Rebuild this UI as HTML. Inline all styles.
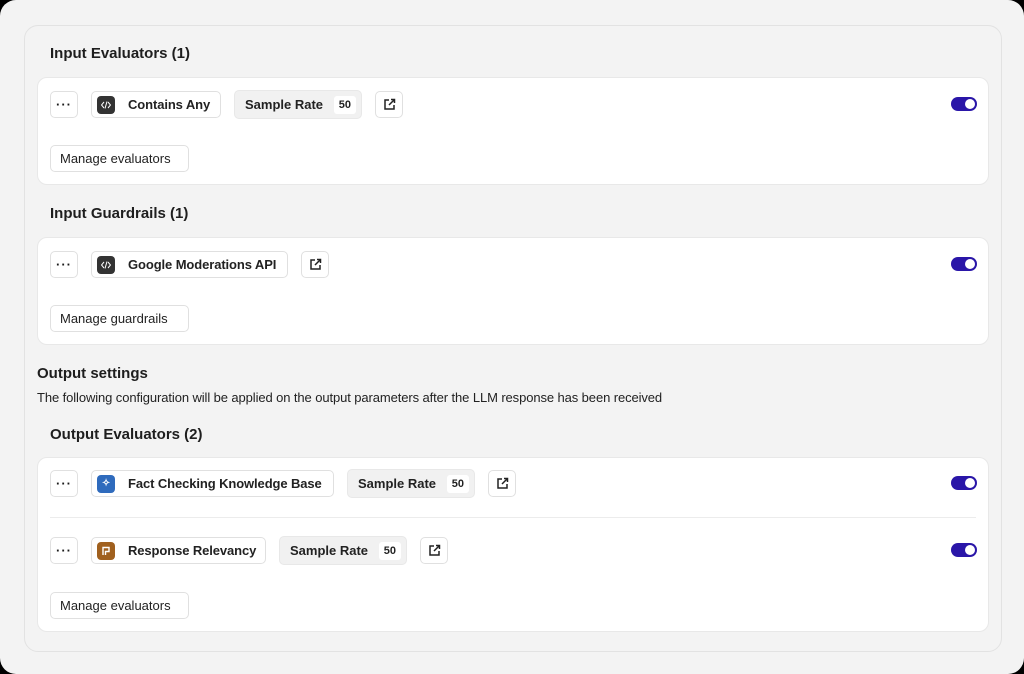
<!DOCTYPE html>
<html><head><style>
*{box-sizing:border-box;margin:0;padding:0}
body{width:1024px;height:674px;background:#000;font-family:"Liberation Sans",sans-serif;color:#1a1a1a;overflow:hidden}
.frame{position:absolute;left:0;top:0;width:1024px;height:674px;background:#f3f3f3;border-radius:16px;overflow:hidden}
.outer{position:absolute;left:24px;top:25px;width:978px;height:627px;border:1px solid #e2e2e2;border-radius:14px;background:#f3f3f3}
.card{position:absolute;left:37px;width:952px;background:#fff;border:1px solid #e8e8e8;border-radius:10px}
.h{position:absolute;font-size:15px;font-weight:600;color:#1e1e1e;white-space:nowrap}
.btn{position:absolute;height:27px;border:1px solid #e0e0e0;border-radius:5px;background:#fff;font-size:13px;display:flex;align-items:center;white-space:nowrap}
.dots{width:28px;justify-content:center;font-size:13px;font-weight:bold;letter-spacing:1px;line-height:1}
.chip{padding:0 10px 0 5px;font-weight:600;color:#222;letter-spacing:-0.1px}
.ic{width:18px;height:18px;border-radius:4px;margin-right:13px;display:flex;align-items:center;justify-content:center;flex:none}
.sr{position:absolute;height:29px;background:#f1f1f1;border:1px solid #e8e8e8;border-radius:5px;font-size:13px;font-weight:600;display:flex;align-items:center;justify-content:space-between;padding:0 5px 0 10px;color:#222;white-space:nowrap}
.sr span{background:#fff;border-radius:3px;font-size:11px;padding:3px 5px;font-weight:600}
.lnk{width:28px;justify-content:center}
.tog{position:absolute;width:26px;height:14px;border-radius:7px;background:#2a16a8;left:913px}
.tog:after{content:"";position:absolute;right:2px;top:2px;width:10px;height:10px;border-radius:50%;background:#fff}
.mg{padding:0 9px;font-weight:500;color:#222}
</style></head><body><div class="frame">
<div class="outer"></div>
<div class="h" style="left:50px;top:45px">Input Evaluators (1)</div>
<div class="card" style="top:77px;height:108px">
 <div class="btn dots" style="left:12px;top:13px">···</div>
 <div class="btn chip" style="left:53px;top:13px;width:130px"><div class="ic" style="background:#333"><svg width="10" height="8" viewBox="0 0 10 8" fill="none" stroke="#fff" stroke-width="1"><path d="M3 1L0.5 4L3 7M7 1L9.5 4L7 7M6 0.5L4 7.5"/></svg></div>Contains Any</div>
 <div class="sr" style="left:196px;top:12px;width:128px">Sample Rate<span>50</span></div>
 <div class="btn lnk" style="left:337px;top:13px"><svg width="13" height="13" viewBox="0 0 13 13" fill="none" stroke="#222" stroke-width="1.5"><path d="M6 2H2v9h9V7M8 1.5h3.5V5M11.5 1.5L6 7"/></svg></div>
 <div class="tog" style="top:19px"></div>
 <div class="btn mg" style="left:12px;top:67px;width:139px">Manage evaluators</div>
</div>
<div class="h" style="left:50px;top:205px">Input Guardrails (1)</div>
<div class="card" style="top:237px;height:108px">
 <div class="btn dots" style="left:12px;top:13px">···</div>
 <div class="btn chip" style="left:53px;top:13px;width:197px"><div class="ic" style="background:#333"><svg width="10" height="8" viewBox="0 0 10 8" fill="none" stroke="#fff" stroke-width="1"><path d="M3 1L0.5 4L3 7M7 1L9.5 4L7 7M6 0.5L4 7.5"/></svg></div>Google Moderations API</div>
 <div class="btn lnk" style="left:263px;top:13px"><svg width="13" height="13" viewBox="0 0 13 13" fill="none" stroke="#222" stroke-width="1.5"><path d="M6 2H2v9h9V7M8 1.5h3.5V5M11.5 1.5L6 7"/></svg></div>
 <div class="tog" style="top:19px"></div>
 <div class="btn mg" style="left:12px;top:67px;width:139px">Manage guardrails</div>
</div>
<div class="h" style="left:37px;top:365px;font-weight:700">Output settings</div>
<div style="position:absolute;left:37px;top:390px;font-size:13px;color:#222;white-space:nowrap;letter-spacing:-0.1px">The following configuration will be applied on the output parameters after the LLM response has been received</div>
<div class="h" style="left:50px;top:426px">Output Evaluators (2)</div>
<div class="card" style="top:457px;height:175px">
 <div class="btn dots" style="left:12px;top:12px">···</div>
 <div class="btn chip" style="left:53px;top:12px;width:243px"><div class="ic" style="background:#2f6bbd;color:#fff;font-size:10px">✧</div>Fact Checking Knowledge Base</div>
 <div class="sr" style="left:309px;top:11px;width:128px">Sample Rate<span>50</span></div>
 <div class="btn lnk" style="left:450px;top:12px"><svg width="13" height="13" viewBox="0 0 13 13" fill="none" stroke="#222" stroke-width="1.5"><path d="M6 2H2v9h9V7M8 1.5h3.5V5M11.5 1.5L6 7"/></svg></div>
 <div class="tog" style="top:18px"></div>
 <div style="position:absolute;left:12px;right:12px;top:59px;border-top:1px solid #ececec"></div>
 <div class="btn dots" style="left:12px;top:79px">···</div>
 <div class="btn chip" style="left:53px;top:79px;width:175px"><div class="ic" style="background:#a0601e"><svg width="10" height="10" viewBox="0 0 10 10" fill="none" stroke="#fff" stroke-width="1.4"><path d="M2 9V1.5h6v4H4.5V9"/></svg></div>Response Relevancy</div>
 <div class="sr" style="left:241px;top:78px;width:128px">Sample Rate<span>50</span></div>
 <div class="btn lnk" style="left:382px;top:79px"><svg width="13" height="13" viewBox="0 0 13 13" fill="none" stroke="#222" stroke-width="1.5"><path d="M6 2H2v9h9V7M8 1.5h3.5V5M11.5 1.5L6 7"/></svg></div>
 <div class="tog" style="top:85px"></div>
 <div class="btn mg" style="left:12px;top:134px;width:139px">Manage evaluators</div>
</div>
</div></body></html>
